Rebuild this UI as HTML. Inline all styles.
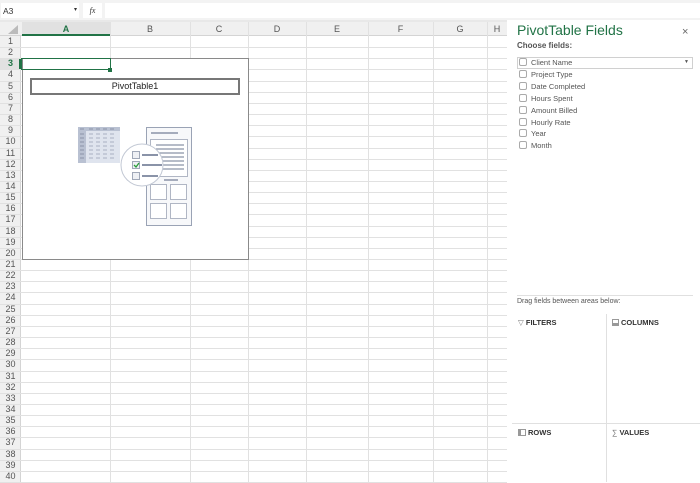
<!DOCTYPE html>
<html><head><meta charset="utf-8"><style>
*{box-sizing:border-box;margin:0;padding:0}
body{width:700px;height:482px;overflow:hidden;background:#fff;font-family:"Liberation Sans",sans-serif;position:relative}
.a{position:absolute}
.hl{position:absolute;height:1px;background:#e1e1e1}
.vl{position:absolute;width:1px;background:#e1e1e1}
.rn{position:absolute;left:0;width:21px;font-size:9px;color:#555;text-align:center}
.cn{position:absolute;top:22px;height:14px;font-size:9px;color:#555;text-align:center;line-height:14px}
.f{position:absolute;left:519px;font-size:7.5px;color:#555;height:10px;line-height:10px}
.f i{display:inline-block;width:8px;height:8px;border:1px solid #aaa;border-radius:2px;vertical-align:-1px;margin-right:4px}
.ar{position:absolute;font-size:7.5px;font-weight:bold;color:#333}
</style></head><body>
<div class="a" style="left:0;top:0;width:700px;height:20px;background:#f3f3f3"></div>
<div class="a" style="left:1px;top:3px;width:78px;height:15px;background:#fff;font-size:8.5px;color:#333;padding:3px 2px">A3<span style="position:absolute;right:2px;top:3px;font-size:6px">▾</span></div>
<div class="a" style="left:83px;top:3px;width:19px;height:15px;background:#fff;font-size:8px;font-style:italic;font-family:'Liberation Serif',serif;text-align:center;line-height:15px;color:#333">fx</div>
<div class="a" style="left:105px;top:3px;width:595px;height:15px;background:#fff"></div>
<div class="a" style="left:0;top:20px;width:700px;height:2px;background:#e8e8e8"></div>
<div class="a" style="left:0;top:22px;width:507px;height:14px;background:#f0f0f0;border-bottom:1px solid #d4d4d4"></div>
<div class="a" style="left:0;top:36px;width:21px;height:446px;background:#f0f0f0;border-right:1px solid #d4d4d4"></div>
<div class="a" style="left:22px;top:22px;width:88px;height:14px;background:#e1e1e1;border-bottom:2px solid #217346"></div>
<div class="a" style="left:0;top:58px;width:21px;height:11px;background:#e1e1e1;border-right:2px solid #217346"></div>
<div class="a" style="left:8px;top:25px;width:0;height:0;border-left:10px solid transparent;border-bottom:9px solid #bbb"></div>
<div id="g"></div>
<div class="a" style="left:22px;top:58px;width:227px;height:202px;background:#fff;border:1px solid #8a8a8a"></div>
<div class="a" style="left:21px;top:58px;width:90px;height:12px;border:1px solid #217346"></div>
<div class="a" style="left:108px;top:68px;width:4px;height:4px;background:#217346"></div>
<div class="a" style="left:30px;top:78px;width:210px;height:17px;border:2px solid #777;font-size:9px;text-align:center;line-height:13px;color:#222">PivotTable1</div>
<svg class="a" style="left:76px;top:125px" width="120" height="104">
<rect x="2" y="2" width="42" height="36" fill="#dfe4ee"/><rect x="2" y="2" width="42" height="4" fill="#b9c1d2"/><rect x="2" y="2" width="8" height="36" fill="#b9c1d2"/>
<g stroke="#8a93a8" stroke-width="1"><line x1="4" y1="4" x2="8" y2="4"/><line x1="13" y1="4" x2="41" y2="4" stroke-dasharray="4 3"/>
<line x1="4" y1="9" x2="8" y2="9"/><line x1="4" y1="13" x2="8" y2="13"/><line x1="4" y1="17" x2="8" y2="17"/><line x1="4" y1="21" x2="8" y2="21"/><line x1="4" y1="25" x2="8" y2="25"/><line x1="4" y1="29" x2="8" y2="29"/><line x1="4" y1="33" x2="8" y2="33"/>
<g stroke="#a8b0c2" stroke-dasharray="4 3"><line x1="13" y1="9" x2="41" y2="9"/><line x1="13" y1="13" x2="41" y2="13"/><line x1="13" y1="17" x2="41" y2="17"/><line x1="13" y1="21" x2="41" y2="21"/><line x1="13" y1="25" x2="41" y2="25"/><line x1="13" y1="29" x2="41" y2="29"/><line x1="13" y1="33" x2="41" y2="33"/></g></g>
<rect x="70.5" y="2.5" width="45" height="98" fill="#f7f8fa" stroke="#9aa3b5"/>
<line x1="75" y1="8" x2="102" y2="8" stroke="#8a93a8" stroke-width="1.5"/>
<rect x="74.5" y="14.5" width="37" height="37" fill="#fff" stroke="#b0b6c4"/>
<g stroke="#8a93a8" stroke-width="1.3"><line x1="80" y1="20" x2="108" y2="20"/><line x1="80" y1="24" x2="108" y2="24"/><line x1="80" y1="28" x2="108" y2="28"/><line x1="80" y1="32" x2="108" y2="32"/><line x1="80" y1="36" x2="108" y2="36"/><line x1="80" y1="40" x2="108" y2="40"/><line x1="80" y1="44" x2="108" y2="44"/></g>
<line x1="88" y1="55" x2="102" y2="55" stroke="#8a93a8" stroke-width="1.5"/>
<rect x="74.5" y="59.5" width="16" height="15" fill="#fff" stroke="#b0b6c4"/><rect x="94.5" y="59.5" width="16" height="15" fill="#fff" stroke="#b0b6c4"/>
<rect x="74.5" y="78.5" width="16" height="15" fill="#fff" stroke="#b0b6c4"/><rect x="94.5" y="78.5" width="16" height="15" fill="#fff" stroke="#b0b6c4"/>
<circle cx="66" cy="40" r="21" fill="#fff" stroke="#c2c8d4"/>
<rect x="56.5" y="26.5" width="7" height="7" fill="#eef0f4" stroke="#a0a8b8"/><rect x="56.5" y="36.5" width="7" height="7" fill="#eef0f4" stroke="#a0a8b8"/><rect x="56.5" y="47.5" width="7" height="7" fill="#eef0f4" stroke="#a0a8b8"/>
<path d="M58 40 l2 2 l3 -4" stroke="#2a9d3a" stroke-width="1.3" fill="none"/>
<g stroke="#8a93a8" stroke-width="2"><line x1="66" y1="30" x2="82" y2="30"/><line x1="66" y1="40" x2="86" y2="40"/><line x1="66" y1="51" x2="82" y2="51"/></g>
</svg>
<div class="a" style="left:507px;top:20px;width:193px;height:462px;background:#fff"></div>
<div class="a" style="left:517px;top:22px;font-size:14px;color:#217346">PivotTable Fields</div>
<div class="a" style="left:682px;top:26px;font-size:11px;color:#666">×</div>
<div class="a" style="left:517px;top:41px;font-size:8px;font-weight:bold;color:#555">Choose fields:</div>
<div class="a" style="left:517px;top:57px;width:176px;height:12px;border:1px solid #d0d0d0"><span style="position:absolute;right:3px;top:1px;font-size:5px;color:#555">▼</span></div>
<div class="f" style="top:58px"><i></i>Client Name</div>
<div class="f" style="top:70px"><i></i>Project Type</div>
<div class="f" style="top:82px"><i></i>Date Completed</div>
<div class="f" style="top:94px"><i></i>Hours Spent</div>
<div class="f" style="top:106px"><i></i>Amount Billed</div>
<div class="f" style="top:118px"><i></i>Hourly Rate</div>
<div class="f" style="top:129px"><i></i>Year</div>
<div class="f" style="top:141px"><i></i>Month</div>
<div class="a" style="left:517px;top:295px;width:176px;height:1px;background:#e0e0e0"></div>
<div class="a" style="left:517px;top:298px;font-size:7px;color:#555">Drag fields between areas below:</div>
<div class="a" style="left:606px;top:314px;width:1px;height:168px;background:#e0e0e0"></div>
<div class="a" style="left:512px;top:423px;width:188px;height:1px;background:#e0e0e0"></div>
<div class="ar" style="left:518px;top:318px"><span style="font-weight:normal;color:#777">▽</span> FILTERS</div>
<div class="ar" style="left:612px;top:318px"><span style="display:inline-block;width:7px;height:7px;border:1px solid #999;border-bottom-width:3px;vertical-align:-1px;margin-right:2px"></span>COLUMNS</div>
<div class="ar" style="left:518px;top:428px"><span style="display:inline-block;width:8px;height:7px;border:1px solid #999;border-left-width:3px;vertical-align:-1px;margin-right:2px"></span>ROWS</div>
<div class="ar" style="left:612px;top:428px"><span style="font-weight:normal;color:#777">∑</span> VALUES</div>
<script>
var g=document.getElementById('g'),h='';
var cols=[22,110,190,248,306,368,433,487,507],nm='ABCDEFGH';
for(var i=0;i<8;i++){h+='<div class="cn" style="left:'+cols[i]+'px;width:'+(cols[i+1]-cols[i])+'px;'+(i==0?'color:#217346;font-weight:bold':'')+'">'+nm[i]+'</div>';
 h+='<div class="vl" style="left:'+cols[i+1]+'px;top:22px;height:460px"></div>';}
for(var r=0;r<40;r++){var t=36+r*11.15;h+='<div class="rn" style="top:'+t+'px;height:11px;line-height:11px;'+(r==2?'color:#217346;font-weight:bold':'')+'">'+(r+1)+'</div>';
 h+='<div class="hl" style="left:0;width:507px;top:'+Math.round(t+11.15)+'px"></div>';}
g.innerHTML=h;
</script>
</body></html>
